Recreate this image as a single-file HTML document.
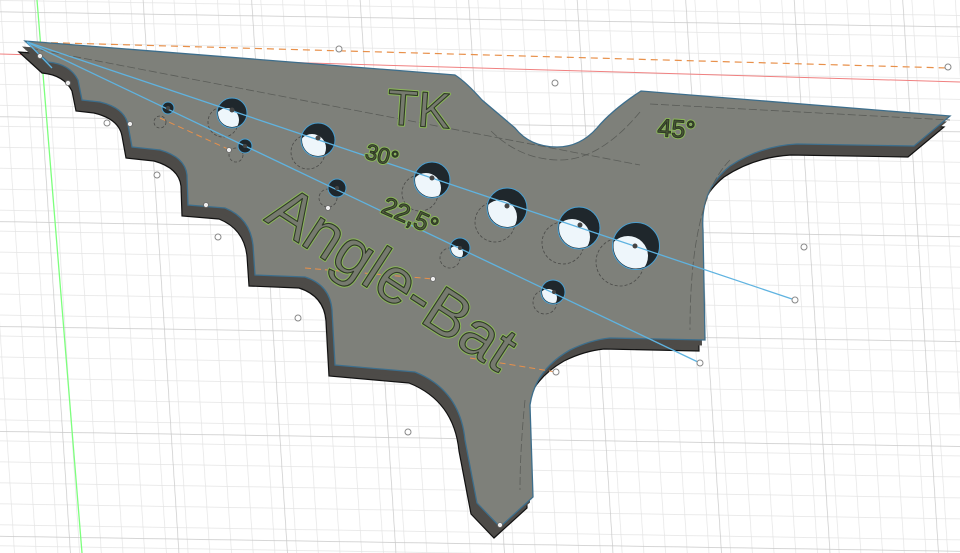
<!DOCTYPE html>
<html><head><meta charset="utf-8"><style>
html,body{margin:0;padding:0;background:#fff;width:960px;height:553px;overflow:hidden}
svg{display:block}
</style></head><body>
<svg width="960" height="553" viewBox="0 0 960 553" xmlns="http://www.w3.org/2000/svg">
<defs>
<pattern id="minor" width="21.7" height="21" patternUnits="userSpaceOnUse" patternTransform="skewX(4.6) rotate(0.9)">
<path d="M0 0V21M0 0H21.7" stroke="#e4e4e4" stroke-width="1.4" fill="none"/>
</pattern>
<pattern id="major" width="108.5" height="105" patternUnits="userSpaceOnUse" patternTransform="translate(35,12) skewX(4.6) rotate(0.9)">
<path d="M0 0V105M0 0H108.5" stroke="#c8c8c8" stroke-width="1.4" fill="none"/>
</pattern>
<path id="top" d="M25,41 L48,62 Q70,64 78,80 L82,100 L100,102 Q125,108 128,125 L132,147 L160,150 Q185,157 187,175 L188,205 L225,208 Q250,218 253,245 L255,275 L305,277 Q330,285 332,310 L335,365 L415,372 Q460,390 465,440 L477,503 L500,527 L533,497 L530,405 Q535,370 570,350 Q590,340 610,338 L705,340 L703,230 Q700,190 730,166 Q760,146 797,144 L914,146 L950,116 L641,91 Q612,110 597,128 Q580,147 557,147 Q530,147 515,128 L482,100 Q466,82 455,75 Z"/>
</defs>
<rect width="960" height="553" fill="#fff"/>
<rect width="960" height="553" fill="url(#minor)"/>
<rect width="960" height="553" fill="url(#major)"/>
<line x1="37" y1="0" x2="82" y2="553" stroke="#7dff7d" stroke-width="1.3"/>
<line x1="0" y1="54" x2="960" y2="82" stroke="#f08080" stroke-width="1"/>
<line x1="27" y1="42" x2="948" y2="68" stroke="#e8904a" stroke-width="1.2" stroke-dasharray="7,5"/>

<!-- side faces -->
<use href="#top" transform="translate(-6,11)" fill="#4d4b48" stroke="#111" stroke-width="1.2"/>
<use href="#top" transform="translate(-3,5.5)" fill="#4d4b48"/>
<!-- top face -->
<use href="#top" fill="#7e807a" stroke="#3d6e8c" stroke-width="1.3"/>

<!-- faint sketch lines -->
<path d="M30,48 L640,165 M640,112 Q600,160 560,160 Q520,160 490,130 M650,104 L950,120 M730,160 Q690,200 690,330 M525,400 Q520,450 520,490" stroke="#5a5c58" stroke-width="0.8" fill="none" stroke-dasharray="8,3"/>
<line x1="470" y1="358" x2="556" y2="372" stroke="#e8904a" stroke-width="1" stroke-dasharray="6,4"/>
<line x1="305" y1="268" x2="433" y2="279" stroke="#e8904a" stroke-width="1" stroke-dasharray="6,4"/>
<line x1="160" y1="118" x2="230" y2="150" stroke="#e8904a" stroke-width="1" stroke-dasharray="6,4"/>

<!-- holes -->
<g id="holes">
<g fill="none" stroke="#4a4a48" stroke-width="0.8" stroke-dasharray="3,2">
<circle cx="223" cy="122" r="15"/><circle cx="308" cy="152" r="17"/><circle cx="420" cy="193" r="18"/><circle cx="495" cy="222" r="20"/><circle cx="563" cy="243" r="21"/><circle cx="620" cy="262" r="24"/>
<circle cx="160" cy="122" r="6"/><circle cx="236" cy="155" r="7"/><circle cx="328" cy="198" r="9"/><circle cx="450" cy="258" r="10"/><circle cx="545" cy="302" r="12"/>
</g>
</g>
<g stroke="#4a9fd0" stroke-width="1">
<circle cx="232" cy="113" r="15" fill="#1f272c"/><circle cx="318" cy="140" r="17" fill="#1f272c"/><circle cx="432" cy="180" r="18" fill="#1f272c"/><circle cx="507" cy="208" r="20" fill="#1f272c"/><circle cx="579" cy="228" r="21" fill="#1f272c"/><circle cx="636" cy="246" r="23.5" fill="#1f272c"/>
<circle cx="168" cy="108" r="6" fill="#1f272c"/><circle cx="245" cy="146" r="7" fill="#1f272c"/><circle cx="337" cy="188" r="9" fill="#1f272c"/><circle cx="460" cy="248" r="10" fill="#1f272c"/><circle cx="553" cy="292" r="12" fill="#1f272c"/>
</g>
<g fill="#eef6fb">
<clipPath id="c1"><circle cx="232" cy="113" r="14"/></clipPath><circle cx="227" cy="120" r="12" clip-path="url(#c1)"/>
<clipPath id="c2"><circle cx="318" cy="140" r="16"/></clipPath><circle cx="312" cy="148" r="14" clip-path="url(#c2)"/>
<clipPath id="c3"><circle cx="432" cy="180" r="17"/></clipPath><circle cx="426" cy="188" r="15" clip-path="url(#c3)"/>
<clipPath id="c4"><circle cx="507" cy="208" r="19"/></clipPath><circle cx="500" cy="217" r="17" clip-path="url(#c4)"/>
<clipPath id="c5"><circle cx="579" cy="228" r="20"/></clipPath><circle cx="572" cy="237" r="18" clip-path="url(#c5)"/>
<clipPath id="c6"><circle cx="636" cy="246" r="22.5"/></clipPath><circle cx="628" cy="256" r="20" clip-path="url(#c6)"/>
<clipPath id="c9"><circle cx="460" cy="248" r="9"/></clipPath><circle cx="456" cy="253" r="7" clip-path="url(#c9)"/>
<clipPath id="c10"><circle cx="553" cy="292" r="11"/></clipPath><circle cx="548" cy="298" r="9" clip-path="url(#c10)"/>
</g>

<!-- blue construction lines -->
<line x1="27" y1="42" x2="795" y2="300" stroke="#5fb3e0" stroke-width="1.3"/>
<line x1="27" y1="42" x2="700" y2="363" stroke="#5fb3e0" stroke-width="1.3"/>
<line x1="27" y1="42" x2="52" y2="68" stroke="#5fb3e0" stroke-width="1.3"/>

<!-- text -->
<g font-family="Liberation Sans, sans-serif" fill="#767a6e" stroke-linejoin="round">
<g stroke="#8cb85a" stroke-width="3">
<text x="386" y="124" font-size="50" transform="rotate(4 386 124)">TK</text>
<text x="364" y="158" font-size="22" transform="rotate(16 364 158)">30°</text>
<text x="380" y="212" font-size="25" transform="rotate(24 380 212)">22,5°</text>
<text x="263" y="220" font-size="64" transform="rotate(33 263 220)">Angle-Bat</text>
<text x="657" y="136" font-size="25" transform="rotate(4 657 136)">45°</text>
</g>
<g stroke="#2f3a26" stroke-width="1.1">
<text x="386" y="124" font-size="50" transform="rotate(4 386 124)">TK</text>
<text x="364" y="158" font-size="22" transform="rotate(16 364 158)" fill="#55623f">30°</text>
<text x="380" y="212" font-size="25" transform="rotate(24 380 212)" fill="#55623f">22,5°</text>
<text x="263" y="220" font-size="64" transform="rotate(33 263 220)">Angle-Bat</text>
<text x="657" y="136" font-size="25" transform="rotate(4 657 136)" fill="#4c5a38">45°</text>
</g>
</g>

<!-- points -->
<g fill="#fff" stroke="#888" stroke-width="1">
<circle cx="339" cy="49" r="3"/><circle cx="948" cy="67" r="3"/><circle cx="555" cy="83" r="3"/><circle cx="107" cy="123" r="3"/><circle cx="157" cy="175" r="3"/><circle cx="218" cy="237" r="3"/><circle cx="298" cy="318" r="3"/><circle cx="556" cy="372" r="3"/><circle cx="408" cy="432" r="3"/><circle cx="804" cy="247" r="3"/><circle cx="795" cy="300" r="3"/><circle cx="700" cy="363" r="3"/>
</g>
<g fill="#eee" stroke="#666" stroke-width="0.8">
<circle cx="40" cy="56" r="2.5"/><circle cx="68" cy="83" r="2.5"/><circle cx="130" cy="124" r="2.5"/><circle cx="229" cy="150" r="2.5"/><circle cx="206" cy="205" r="2.5"/><circle cx="328" cy="208" r="2.5"/><circle cx="433" cy="279" r="2.5"/><circle cx="500" cy="525" r="2.5"/>
</g>
<g fill="#444"><circle cx="232" cy="110" r="2.5"/><circle cx="318" cy="138" r="2.5"/><circle cx="432" cy="178" r="2.5"/><circle cx="507" cy="206" r="2.5"/><circle cx="580" cy="225" r="2.5"/><circle cx="635" cy="246" r="2.5"/><circle cx="168" cy="108" r="2"/><circle cx="245" cy="146" r="2"/><circle cx="337" cy="188" r="2"/><circle cx="460" cy="248" r="2"/><circle cx="554" cy="292" r="2"/></g>
</svg>
</body></html>
